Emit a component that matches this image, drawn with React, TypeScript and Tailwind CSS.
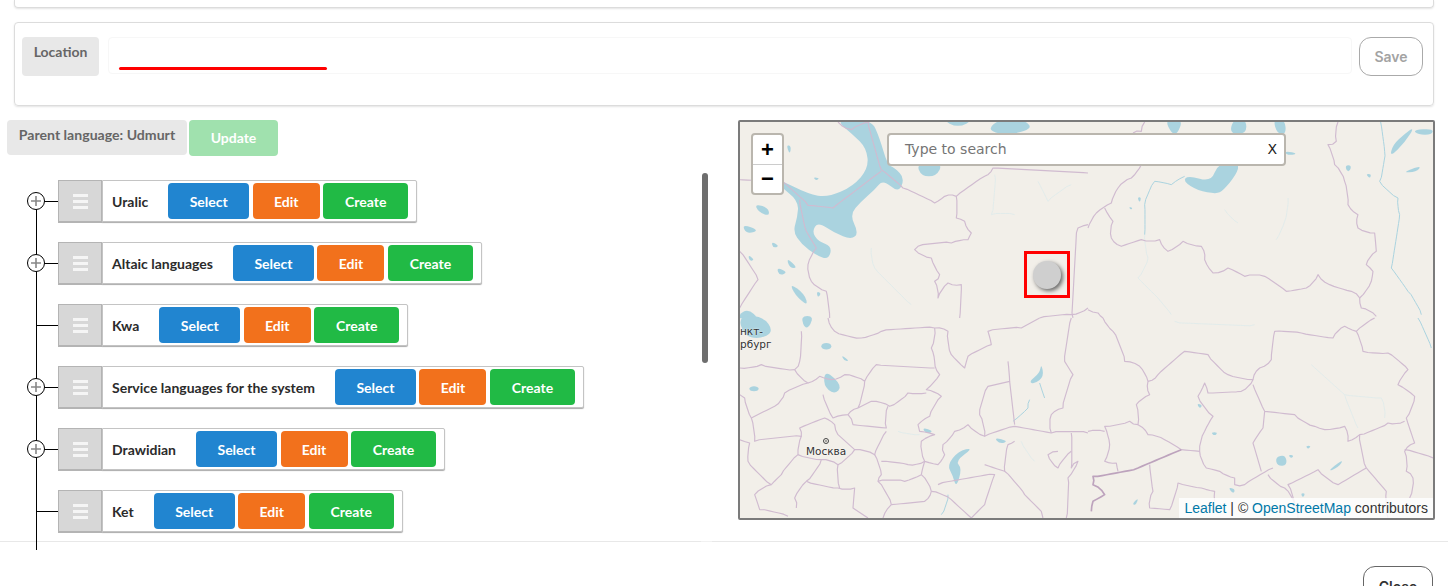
const languages = [
  { name: "Uralic", expandable: true },
  { name: "Altaic languages", expandable: true },
  { name: "Kwa", expandable: false },
  { name: "Service languages for the system", expandable: true },
  { name: "Drawidian", expandable: true },
  { name: "Ket", expandable: false },
];

// Map traces, in the coordinates of each 3x tile of the map
const tiles = [
  {
    at: "translate(738 118) scale(0.3333)",
    water: [
      "M290 4L345 50L385 90L392 150L345 205L270 238L210 228L125 185L120 200L182 248L178 300L165 340L190 378L235 412L272 425L282 385L240 370L222 340L240 312L290 345L340 365L362 345L335 290L370 250L410 215L435 185L482 225L500 180L470 150L448 140L425 60L400 4Z",
      "M535 135L615 135L595 175L550 175Z",
      "M610 4L710 4L660 30Z",
      "M750 32L785 4L855 4L885 30L830 48L780 48Z",
      "M50 258L90 268L95 295L62 282Z",
      "M115 448L150 462L125 474Z",
      "M155 495L200 528L210 565L172 532Z",
      "M0 592L30 572L65 604L8 604Z",
      "M145 418L180 450L155 450Z",
      "M12 318L65 338L25 348Z",
      "M145 80L160 85L155 110Z",
      "M225 178L245 180L235 188Z",
      "M100 370L125 385L105 390Z",
      "M30 410L50 425L35 430Z",
      "M235 520L250 525L240 540Z",
    ],
    borders: [
      "M390 12L430 155L495 210L590 255L620 235L655 235L655 300L680 310L700 345L690 365L640 375L540 385L530 395L580 420L605 470L590 490L600 540L630 495L670 500L665 600",
      "M655 235L740 175L765 150L1050 165",
      "M300 12L340 35L395 12",
      "M0 185L130 190L210 262L285 270L430 160",
      "M185 245L205 340L235 390L210 440L220 490L265 520L275 600",
      "M5 400L60 485L5 570",
      "M1050 320L1020 330L1005 600",
      "M905 600L1000 590L1050 570",
    ],
    rivers: [],
    faint: ["M770 170L760 290L830 290", "M900 190L930 250L1000 200", "M400 390L410 450L520 560"],
  },
  {
    at: "translate(1088 118) scale(0.3333)",
    water: [
      "M390 135L455 135L445 170L405 218L385 228L330 218L285 190L300 172L370 192Z",
      "M230 4L285 4L268 48L252 48Z",
      "M435 4L475 4L475 48L425 48Z",
      "M555 4L590 4L595 48L568 48Z",
      "M905 118L915 80L950 48L980 26L952 72Z",
      "M975 36L1036 32L1032 50L990 50Z",
      "M942 164L1002 142L985 162Z",
      "M772 142L790 142L786 160L776 160Z",
      "M833 168L850 168L846 182Z",
      "M592 98L632 108L595 112Z",
      "M148 238L160 238L155 255Z",
      "M122 266L135 270L128 276Z",
    ],
    borders: [
      "M170 12L160 40L135 45",
      "M160 140L130 180L90 210L70 255L25 285L0 330",
      "M50 270L75 310L70 360L100 385L160 365L215 365L240 400L285 370L340 385L350 425L375 465L420 450L470 475L530 475L595 520L655 510L690 470L725 500L790 520L815 540L820 570L865 595",
      "M750 12L745 70L720 80L740 140L770 190L780 260L810 290L810 330L860 345L865 400L835 440L855 460L850 490L815 540",
      "M0 575L30 585L45 600",
    ],
    rivers: [
      "M878 12L890 100L875 190L930 240L935 290L910 450L960 520L1000 590",
      "M290 175L250 200L200 190L170 260L170 350",
    ],
    faint: ["M170 350L180 420L150 480L200 530L250 590", "M410 275L450 315", "M600 240L590 310L565 365"],
  },
  {
    at: "translate(738 318) scale(0.3333)",
    water: [
      "M0 -6L75 -6L108 42L62 64L18 52Z",
      "M186 -6L230 -6L205 40Z",
      "M250 85C250 72 280 72 280 85C280 98 250 98 250 85Z",
      "M262 155L314 205L288 230L256 202Z",
      "M34 212C34 202 62 202 62 212C62 222 34 222 34 212Z",
      "M628 442L660 400L708 388L652 430L672 450L655 510L644 472Z",
      "M872 192L905 165L910 136L918 176L890 198Z",
      "M768 358L812 370L785 378Z",
      "M552 328L588 340L565 348Z",
      "M310 110L335 130L318 128Z",
    ],
    borders: [
      "M270 0L290 40L370 60L430 40L590 30L630 40L640 110L680 150L690 115L760 80L750 40L850 30L905 0",
      "M590 30L580 90L590 130L605 170L565 215L610 235L575 295L540 320L545 340L590 350L550 370L560 430L600 440L620 410L615 380L650 340L690 320L740 355L830 325L940 345L1050 345",
      "M190 40L185 130L170 155L210 195L140 225L110 265L40 300L20 240L5 230",
      "M5 150L70 140L170 155",
      "M210 195L245 175L280 185L320 170L380 190L415 140L590 150",
      "M380 190L360 270L400 250L455 265L510 225L565 225",
      "M255 230L285 300L330 290L360 270",
      "M330 290L345 320L445 330L450 265",
      "M40 300L50 370L190 355L185 330L260 300L290 320L300 350L350 395L410 410L445 340",
      "M5 365L35 375L30 430L100 500L50 530L65 575L150 595",
      "M190 355L180 410L130 470L100 500",
      "M180 410L250 425L300 440L350 395",
      "M250 425L205 490L170 540L175 570",
      "M205 490L300 510L350 510L345 570L390 600",
      "M300 440L305 510",
      "M410 410L430 470L420 490L460 560L435 600",
      "M420 490L500 490L550 470L580 520L560 550L460 560",
      "M430 430L510 440L560 430L550 470",
      "M580 520L640 545L700 600",
      "M600 500L770 470L740 560L700 600",
      "M740 440L800 460L810 380L830 370",
      "M810 130L815 190L750 205L725 290L740 355",
      "M815 190L830 320",
      "M1000 0L980 130L1005 170L975 270L940 290L940 345",
      "M800 460L860 530L910 580L915 600",
      "M1000 345L1000 450L1020 430L990 480L985 600",
      "M960 400L930 410L960 450L1000 400",
    ],
    rivers: ["M825 310L870 270L875 245", "M630 530L610 590", "M905 195L920 240"],
    faint: ["M480 340L545 350", "M850 370L890 430"],
  },
  {
    at: "translate(1088 318) scale(0.3333)",
    water: [
      "M562 418L592 410L598 442L568 444Z",
      "M716 462L768 422L752 448Z",
      "M420 508L442 514L436 528Z",
      "M132 558L152 538L144 562Z",
      "M326 256L344 262L335 272Z",
      "M368 343L390 343L380 354Z",
      "M653 383L670 383L660 394Z",
      "M638 526L652 526L645 540Z",
      "M600 410L618 412L610 422Z",
    ],
    borders: [
      "M45 0L75 40L110 130L155 145L180 190L185 230L145 260L150 320L180 350L230 365L280 395L335 400",
      "M180 190L210 170L290 100L360 110L420 170L495 185L460 220L360 225L350 195L330 235L375 295L350 340L335 400L355 450L395 460L440 480L440 500L470 500L555 450",
      "M495 185L515 150L550 125L560 40L640 45L735 60L770 25L805 40L860 0",
      "M805 40L825 100L900 105L960 155L930 200L980 235L955 300L980 375L950 400L955 460L975 480L965 540",
      "M495 200L530 280L620 290L680 325L710 335L770 325L780 370L815 350L900 315L950 310",
      "M530 280L525 330L495 375L520 460",
      "M815 350L835 450L895 520L900 600",
      "M835 450L750 500L690 455L600 500L630 600",
      "M540 470L590 510L620 560",
      "M950 395L1035 420",
      "M150 320L125 310L50 325L65 380L50 430L85 435L90 460",
      "M0 340L50 340",
      "M185 440L195 520L185 570L245 575L270 495L340 510L380 520L380 550",
    ],
    heavy: ["M280 395L150 450L15 475L15 500L50 530L15 550L10 580"],
    rivers: ["M990 0L1030 90"],
    faint: ["M670 140L770 230L810 330", "M770 230L880 240L890 300", "M260 10L500 20"],
  },
];

const toPoints = (d: string) => {
  const nums = (d.match(/-?\d+/g) ?? []).map(Number);
  const pts: [number, number][] = [];
  for (let i = 0; i < nums.length; i += 2) pts.push([nums[i], nums[i + 1]]);
  return pts;
};

// Breaks straight traces into small uneven steps, so they read as real borders
const wiggle = (d: string) => {
  const pts = toPoints(d);
  let out = `M${pts[0][0]} ${pts[0][1]}`;
  for (let i = 1; i < pts.length; i++) {
    const [ax, ay] = pts[i - 1];
    const [bx, by] = pts[i];
    const len = Math.hypot(bx - ax, by - ay);
    const steps = Math.max(1, Math.round(len / 14));
    for (let s = 1; s <= steps; s++) {
      const t = s / steps;
      const n = s === steps ? 0 : Math.sin(ax * 12.9 + ay * 78.2 + s * 37.7) * 4;
      out += `L${(ax + (bx - ax) * t + (-(by - ay) / len) * n).toFixed(1)} ${(ay + (by - ay) * t + ((bx - ax) / len) * n).toFixed(1)}`;
    }
  }
  return out;
};

// Rounds the corners of a closed water outline
const smooth = (d: string) => {
  if (d.includes("C")) return d;
  const pts = toPoints(d);
  const mid = (a: [number, number], b: [number, number]) => `${(a[0] + b[0]) / 2} ${(a[1] + b[1]) / 2}`;
  let out = `M${mid(pts[0], pts[1])}`;
  for (let i = 1; i <= pts.length; i++) {
    const p = pts[i % pts.length];
    const next = pts[(i + 1) % pts.length];
    out += `Q${p[0]} ${p[1]} ${mid(p, next)}`;
  }
  return out + "Z";
};

function MapDrawing() {
  return (
    <svg className="absolute inset-0 h-full w-full blur-[0.3px]" viewBox="740 122 693 396" fill="none" aria-hidden="true">
      {tiles.map((tile) => (
        <g key={tile.at} transform={tile.at} strokeLinejoin="round">
          {tile.faint?.map((d) => <path key={d} d={wiggle(d)} stroke="#dfeaea" strokeWidth={2.5} />)}
          {tile.water.map((d) => <path key={d} d={smooth(d)} fill="#aad3df" />)}
          {tile.rivers.map((d) => <path key={d} d={wiggle(d)} stroke="#aad3df" strokeWidth={3} />)}
          {tile.borders.map((d) => <path key={d} d={wiggle(d)} stroke="#d0bbd0" strokeWidth={3.5} />)}
          {tile.heavy?.map((d) => <path key={d} d={wiggle(d)} stroke="#bda3bd" strokeWidth={5} />)}
        </g>
      ))}
      <circle cx="826" cy="441" r="2.5" stroke="#444" strokeWidth={1} />
      <circle cx="826" cy="441" r="0.8" fill="#444" />
    </svg>
  );
}

function MapPanel() {
  return (
    <div className="relative ml-[26px] h-[400px] w-[697px] overflow-hidden rounded-[2px] border-2 border-[#7b7b7b] bg-[#f2efe9] font-['Liberation_Sans',sans-serif]">
      <MapDrawing />

      <span className="absolute left-0 top-[203px] font-['DejaVu_Sans',sans-serif] text-[10.5px] leading-[13px] text-[#333] [text-shadow:0_0_2px_#fff]">
        нкт-
        <br />
        рбург
      </span>
      <span className="absolute left-[66px] top-[322px] font-['DejaVu_Sans',sans-serif] text-[10.5px] leading-[14px] text-[#333] [text-shadow:0_0_2px_#fff]">
        Москва
      </span>

      {/* Zoom control */}
      <div className="absolute left-[11px] top-[11px] flex w-[33px] flex-col rounded-[4px] border-2 border-[#bab6ae] bg-white text-black">
        <div className="flex h-[30px] items-center justify-center border-b border-[#ccc] text-[22px] font-bold leading-none">+</div>
        <div className="flex h-[28px] items-center justify-center text-[22px] font-bold leading-none">−</div>
      </div>

      {/* Search box */}
      <div className="absolute left-[147px] top-[11px] flex h-[33px] w-[399px] items-center justify-between rounded-[4px] border-2 border-[#bab6ae] bg-white pl-[16px] pr-[7px]">
        <span className="font-['DejaVu_Sans',sans-serif] text-[14px] text-[#757575]">Type to search</span>
        <span className="font-['DejaVu_Sans',sans-serif] text-[14px] text-[#222]">X</span>
      </div>

      {/* Marker */}
      <div className="absolute left-[284px] top-[129px] flex h-[47px] w-[46px] items-center justify-center border-[3px] border-[#f00]">
        <div className="h-[28px] w-[28px] rounded-full bg-[#cfcfcf] shadow-[2px_2px_4px_#666]" />
      </div>

      <div className="absolute bottom-0 right-0 flex h-[20px] items-center bg-white/80 pl-[5px] pr-[5px] text-[14px] leading-none text-[#333]">
        <span className="text-[#0078a8]">Leaflet</span>
        <span className="whitespace-pre"> | © </span>
        <span className="text-[#0078a8]">OpenStreetMap</span>
        <span className="whitespace-pre"> contributors</span>
      </div>
    </div>
  );
}

function LanguageRow({ name, expandable }: { name: string; expandable: boolean }) {
  return (
    <div className="relative flex h-[42px] w-max">
      {/* Connector */}
      <div className="absolute left-[-22px] top-[21px] h-px w-[22px] bg-black" />
      {expandable && (
        <div className="absolute left-[-31px] top-[12px] flex h-[18px] w-[18px] items-center justify-center rounded-full border border-black bg-white">
          <svg viewBox="0 0 16 16" className="h-[16px] w-[16px]" stroke="#888" strokeWidth={1.6} aria-hidden="true">
            <path d="M8 3V13M3 8H13" />
          </svg>
        </div>
      )}

      <div className="flex w-[44px] flex-col items-center justify-center gap-[3px] border border-[#b4b4b4] bg-[#d7d7d7] shadow-[0_1px_0_#b4b4b4]">
        <span className="h-[3px] w-[15px] bg-[#f5f5f5]" />
        <span className="h-[3px] w-[15px] bg-[#f5f5f5]" />
        <span className="h-[3px] w-[15px] bg-[#f5f5f5]" />
      </div>

      <div className="flex items-center rounded-r-[2px] border border-[#c4c4c4] bg-white pl-[9px] pr-[8px] shadow-[0_1px_1px_#aaa]">
        <span className="mr-[20px] whitespace-nowrap text-[14px] font-bold text-[#2b2b2b]">{name}</span>
        <div className="flex gap-[3.5px]">
          <button className="h-[36px] w-[81px] rounded-[4px] bg-[#2185d0] text-[14px] font-bold text-white">Select</button>
          <button className="h-[36px] w-[67px] rounded-[4px] bg-[#f2711c] text-[14px] font-bold text-white">Edit</button>
          <button className="h-[36px] w-[85px] rounded-[4px] bg-[#21ba45] text-[14px] font-bold text-white">Create</button>
        </div>
      </div>
    </div>
  );
}

export default function App() {
  return (
    <div className="flex h-[586px] w-full flex-col overflow-hidden bg-white font-['Lato',sans-serif]">
      {/* Card above, scrolled out of view */}
      <div className="mx-[14px] h-[8px] shrink-0 rounded-b-[4px] border-x border-b border-[#dcdcdc] shadow-[0_1px_2px_#e4e4e4]" />

      {/* Location */}
      <div className="mx-[14px] mt-[14px] flex h-[84px] shrink-0 items-start rounded-[4px] border border-[#dcdcdc] pl-[7px] pr-[10px] pt-[14px] shadow-[0_1px_2px_#e4e4e4]">
        <div className="h-[39px] w-[77px] rounded-[4px] bg-[#e8e8e8] pt-[4px] text-center text-[14px] font-bold text-[#666]">
          Location
        </div>
        <div className="ml-[9px] h-[37px] flex-1 rounded-[4px] border border-[#f7f7f7] pl-[10px] pt-[29px]">
          <div className="h-[3px] w-[208px] rounded-full bg-[#f00]" />
        </div>
        <button className="ml-[7px] h-[39px] w-[64px] rounded-[12px] border border-[#aaa] font-['Inter',sans-serif] text-[14px] font-semibold text-[#a3a3a3]">
          Save
        </button>
      </div>

      <div className="relative z-10 mt-[14px] flex h-[430px] shrink-0">
        {/* Tree side */}
        <div className="relative w-[712px] shrink-0 overflow-hidden pl-[7px]">
          <div className="flex items-start gap-[2px]">
            <div className="h-[35px] w-[180px] rounded-[4px] bg-[#e8e8e8] pt-[4px] text-center text-[14.1px] font-bold text-[#666]">
              Parent language: Udmurt
            </div>
            <button className="h-[36px] w-[89px] rounded-[4px] bg-[#a0e1ae] pb-[2px] text-[14px] font-bold text-white">Update</button>
          </div>

          <div className="absolute bottom-0 left-[36px] top-[81px] w-px bg-black" />
          <div className="ml-[51px] mt-[24px] flex flex-col gap-[20px]">
            {languages.map((language) => (
              <LanguageRow key={language.name} name={language.name} expandable={language.expandable} />
            ))}
          </div>

          {/* Scrollbar */}
          <div className="absolute bottom-0 right-0 top-[53px] w-[11px] bg-white/40">
            <div className="ml-[1px] h-[190px] w-[6px] rounded-full bg-[#6e6e6e]" />
          </div>
        </div>

        <MapPanel />
      </div>

      {/* Footer */}
      <div className="mt-[-9px] flex flex-1 justify-end border-t border-[#e8e8e8] pr-[15px] pt-[24px]">
        <button className="h-[40px] w-[70px] rounded-[12px] border border-[#666] font-['Inter',sans-serif] text-[14px] font-semibold text-[#333]">
          Close
        </button>
      </div>
    </div>
  );
}
